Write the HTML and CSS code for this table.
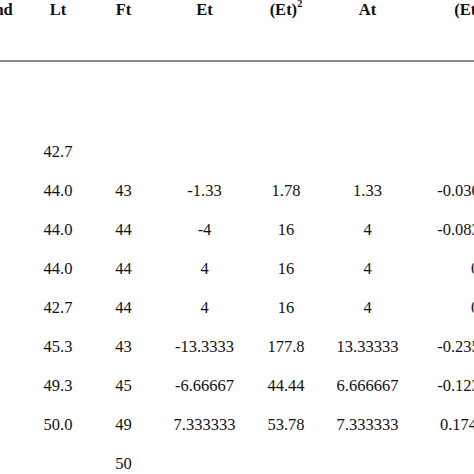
FILE: index.html
```html
<!DOCTYPE html>
<html>
<head>
<meta charset="utf-8">
<link rel="stylesheet" href="styles.css">
</head>
<body>
<div class="sheet">
  <div class="row head">
    <div>Demand</div><div>Lt</div><div>Ft</div><div>Et</div><div>(Et)<sup>2</sup></div><div>At</div><div class="last-head">(Et/At)</div>
  </div>
  <div class="rule"></div>
  <div class="body">
    <div class="row"><div></div><div>42.7</div><div></div><div></div><div></div><div></div><div></div></div>
    <div class="row"><div></div><div>44.0</div><div>43</div><div>-1.33</div><div>1.78</div><div>1.33</div><div>-0.0303030</div></div>
    <div class="row"><div></div><div>44.0</div><div>44</div><div>-4</div><div>16</div><div>4</div><div>-0.0833333</div></div>
    <div class="row"><div></div><div>44.0</div><div>44</div><div>4</div><div>16</div><div>4</div><div>0</div></div>
    <div class="row"><div></div><div>42.7</div><div>44</div><div>4</div><div>16</div><div>4</div><div>0</div></div>
    <div class="row"><div></div><div>45.3</div><div>43</div><div>-13.3333</div><div>177.8</div><div>13.33333</div><div>-0.2352941</div></div>
    <div class="row"><div></div><div>49.3</div><div>45</div><div>-6.66667</div><div>44.44</div><div>6.666667</div><div>-0.1234568</div></div>
    <div class="row"><div></div><div>50.0</div><div>49</div><div>7.333333</div><div>53.78</div><div>7.333333</div><div>0.1746032</div></div>
    <div class="row"><div></div><div></div><div>50</div><div></div><div></div><div></div><div></div></div>
  </div>
</div>
</body>
</html>
```

FILE: styles.css
```css
html, body {
  margin: 0;
  padding: 0;
  background: #ffffff;
  overflow: hidden;
  width: 474px;
  height: 474px;
}
.sheet {
  margin-left: -60px;
  width: 595px;
  font-family: "Liberation Serif", "Times New Roman", serif;
  font-size: 16.5px;
  color: #111111;
}
.row {
  display: grid;
  grid-template-columns: 86px 64px 67px 95px 68px 95px 120px;
  height: 39px;
  line-height: 39px;
  text-align: center;
  white-space: nowrap;
}
.head {
  height: 20px;
  line-height: 20px;
  font-weight: bold;
}
.head sup {
  font-size: 10.5px;
  line-height: 0;
  vertical-align: 8px;
}
.last-head {
  padding-left: 8px;
}
.rule {
  margin-top: 40px;
  height: 2px;
  background: #8a8a8a;
}
.body {
  padding-top: 70px;
}
```
